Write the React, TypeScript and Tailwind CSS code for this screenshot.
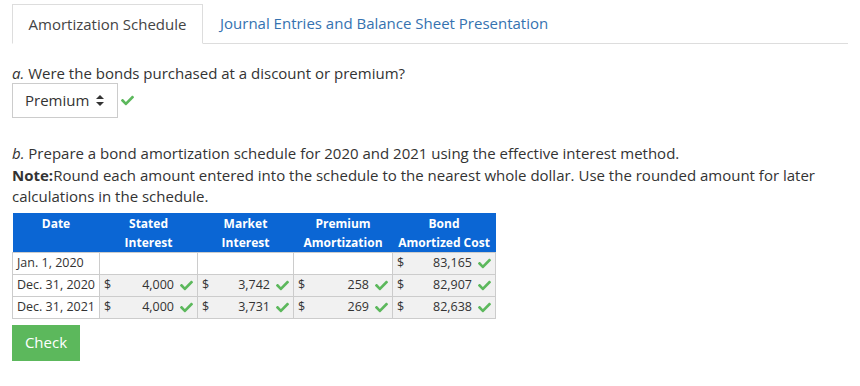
import { FaCheck } from 'react-icons/fa';

const ok = <FaCheck className="w-[13px] h-[13px] text-[#5cb85c] shrink-0" />;

const rows = [
  { date: 'Jan. 1, 2020', stated: '', market: '', prem: '', bond: '83,165' },
  { date: 'Dec. 31, 2020', stated: '4,000', market: '3,742', prem: '258', bond: '82,907' },
  { date: 'Dec. 31, 2021', stated: '4,000', market: '3,731', prem: '269', bond: '82,638' },
];

function Cell({ value }: { value: string }) {
  if (!value) return <td className="border border-[#ccc] bg-white" />;
  return (
    <td className="border border-[#ccc] bg-[#f1f1f1] px-[4px]">
      <div className="flex items-center">
        <span>$</span>
        <span className="flex-1 text-right pr-[6px]">{value}</span>
        {ok}
      </div>
    </td>
  );
}

export default function App() {
  return (
    <div
      className="w-[860px] h-[386px] bg-white text-[#333] text-[15px] px-[12px] pt-[4px]"
      style={{ fontFamily: '"Open Sans", sans-serif' }}
    >
      <div className="flex border-b border-[#ddd] h-[40px]">
        <div className="w-[191px] border border-[#ddd] border-b-white -mb-px bg-white flex items-center justify-center text-[#444]">
          Amortization Schedule
        </div>
        <div className="px-[17px] flex items-center text-[#3572b0]">
          Journal Entries and Balance Sheet Presentation
        </div>
      </div>

      <p className="mt-[20px] leading-[19px]">
        <i>a.</i> Were the bonds purchased at a discount or premium?
      </p>
      <div className="flex items-center gap-[3px]">
        <div className="w-[106px] h-[35px] border border-[#ccc] flex items-center pl-[12px] gap-[7px]">
          <span>Premium</span>
          <svg width="8" height="11" viewBox="0 0 8 11" className="text-[#333]">
            <path d="M4 0 L8 4 L0 4 Z M0 7 L8 7 L4 11 Z" fill="currentColor" />
          </svg>
        </div>
        {ok}
      </div>

      <div className="mt-[25px] leading-[21.5px]">
        <p>
          <i>b.</i> Prepare a bond amortization schedule for 2020 and 2021 using the effective interest method.
        </p>
        <p>
          <b>Note:</b>Round each amount entered into the schedule to the nearest whole dollar. Use the rounded amount for later
          calculations in the schedule.
        </p>
      </div>

      <table className="mt-[5px] border-collapse text-[12.5px]">
        <thead>
          <tr className="bg-[#0b66d4] text-white font-bold text-[12px] leading-[19px]">
            <th className="w-[87px] h-[38px] align-top pt-[1px]">Date</th>
            <th className="w-[98px] align-top pt-[1px]">Stated<br />Interest</th>
            <th className="w-[96px] align-top pt-[1px]">Market<br />Interest</th>
            <th className="w-[99px] align-top pt-[1px]">Premium<br />Amortization</th>
            <th className="w-[103px] align-top pt-[1px]">Bond<br />Amortized Cost</th>
          </tr>
        </thead>
        <tbody>
          {rows.map((r) => (
            <tr key={r.date} className="h-[22px]">
              <td className="border border-[#ccc] bg-white px-[4px] whitespace-nowrap">{r.date}</td>
              <Cell value={r.stated} />
              <Cell value={r.market} />
              <Cell value={r.prem} />
              <Cell value={r.bond} />
            </tr>
          ))}
        </tbody>
      </table>

      <button className="mt-[6px] w-[68px] h-[36px] bg-[#5cb85c] text-white text-[15px]">Check</button>
    </div>
  );
}
